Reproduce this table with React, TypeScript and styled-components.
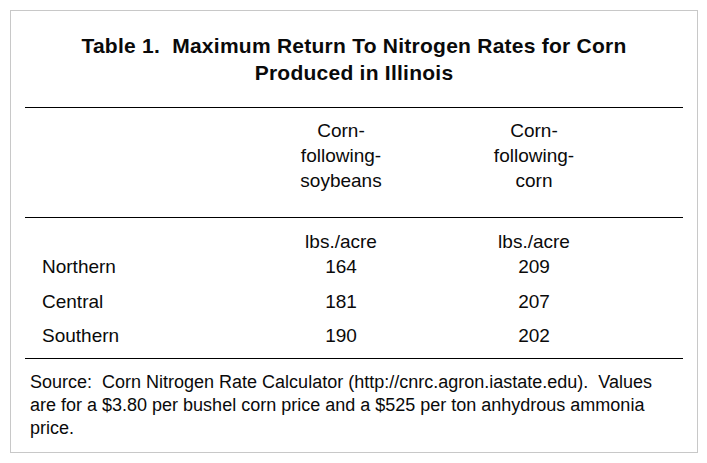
import React from "react";
import styled, { createGlobalStyle } from "styled-components";

const Global = createGlobalStyle`
  html, body { margin: 0; padding: 0; background: #ffffff; }
  body { font-family: "Liberation Sans", Arial, sans-serif; color: #0a0a0a; }
`;

const Frame = styled.div`
  box-sizing: border-box;
  margin: 10px 0 0 10px;
  width: 688px;
  height: 443px;
  border: 1px solid #c8c8c8;
  padding: 0 14px 0 14px;
  background: #ffffff;
`;

const Title = styled.h1`
  margin: 0;
  padding-top: 21px;
  padding-bottom: 21px;
  font-size: 21px;
  letter-spacing: 0.25px;
  line-height: 27px;
  font-weight: 700;
  text-align: center;
  white-space: pre-wrap;
  border-bottom: 1px solid #000;
`;

const Grid = styled.div<{ $pt: number; $pb: number; $rule?: boolean }>`
  display: grid;
  grid-template-columns: 220px 192px 194px 1fr;
  padding-top: ${(p) => p.$pt}px;
  padding-bottom: ${(p) => p.$pb}px;
  border-bottom: ${(p) => (p.$rule ? "1px solid #000" : "none")};
  font-size: 19px;
  line-height: 25px;
`;

const Label = styled.div`
  padding-left: 17px;
`;

const Cell = styled.div`
  text-align: center;
`;

const Row = styled.div<{ $pb: number }>`
  display: contents;
  & > * {
    padding-bottom: ${(p) => p.$pb}px;
  }
`;

const Source = styled.p`
  margin: 0;
  padding: 12px 0 0 5px;
  width: 640px;
  font-size: 18px;
  line-height: 23px;
  white-space: pre-wrap;
`;

const rows = [
  { region: "Northern", soy: "164", corn: "209" },
  { region: "Central", soy: "181", corn: "207" },
  { region: "Southern", soy: "190", corn: "202" },
];

export default function App() {
  return (
    <>
      <Global />
      <Frame>
        <Title>
          {"Table 1.  Maximum Return To Nitrogen Rates for Corn"}
          <br />
          {"Produced in Illinois"}
        </Title>
        <Grid $pt={10} $pb={24} $rule>
          <Label />
          <Cell>
            Corn-
            <br />
            following-
            <br />
            soybeans
          </Cell>
          <Cell>
            Corn-
            <br />
            following-
            <br />
            corn
          </Cell>
          <div />
        </Grid>
        <Grid $pt={11} $pb={0} $rule>
          <Row $pb={0}>
            <Label />
            <Cell>lbs./acre</Cell>
            <Cell>lbs./acre</Cell>
            <div />
          </Row>
          {rows.map((r) => (
            <Row key={r.region} $pb={9.5}>
              <Label>{r.region}</Label>
              <Cell>{r.soy}</Cell>
              <Cell>{r.corn}</Cell>
              <div />
            </Row>
          ))}
        </Grid>
        <Source>
          {
            "Source:  Corn Nitrogen Rate Calculator (http://cnrc.agron.iastate.edu).  Values are for a $3.80 per bushel corn price and a $525 per ton anhydrous ammonia price."
          }
        </Source>
      </Frame>
    </>
  );
}
